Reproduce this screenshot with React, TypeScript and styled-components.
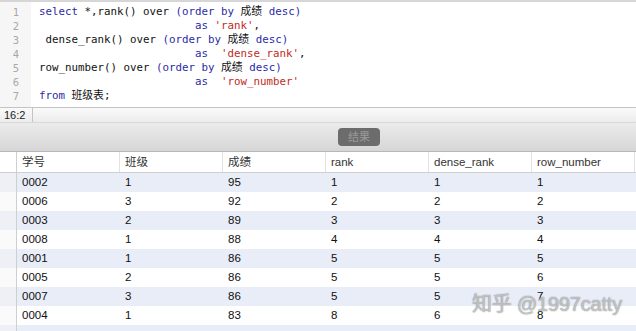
import styled, { createGlobalStyle } from 'styled-components';

const GlobalStyle = createGlobalStyle`
  html, body {
    margin: 0;
    padding: 0;
    background: #ffffff;
    overflow: hidden;
  }
`;

type Tok = { t: string; c?: 'kw' | 'str' };

const code: Tok[][] = [
  [{ t: 'select', c: 'kw' }, { t: ' *,rank() over ' }, { t: '(order by', c: 'kw' }, { t: ' 成绩 ' }, { t: 'desc)', c: 'kw' }],
  [{ t: '                        ' }, { t: 'as', c: 'kw' }, { t: ' ' }, { t: "'rank'", c: 'str' }, { t: ',' }],
  [{ t: ' dense_rank() over ' }, { t: '(order by', c: 'kw' }, { t: ' 成绩 ' }, { t: 'desc)', c: 'kw' }],
  [{ t: '                        ' }, { t: 'as', c: 'kw' }, { t: '  ' }, { t: "'dense_rank'", c: 'str' }, { t: ',' }],
  [{ t: 'row_number() over ' }, { t: '(order by', c: 'kw' }, { t: ' 成绩 ' }, { t: 'desc)', c: 'kw' }],
  [{ t: '                        ' }, { t: 'as', c: 'kw' }, { t: '  ' }, { t: "'row_number'", c: 'str' }],
  [{ t: 'from', c: 'kw' }, { t: ' 班级表;' }],
];

const headers = ['学号', '班级', '成绩', 'rank', 'dense_rank', 'row_number'];

const rows = [
  ['0002', '1', '95', '1', '1', '1'],
  ['0006', '3', '92', '2', '2', '2'],
  ['0003', '2', '89', '3', '3', '3'],
  ['0008', '1', '88', '4', '4', '4'],
  ['0001', '1', '86', '5', '5', '5'],
  ['0005', '2', '86', '5', '5', '6'],
  ['0007', '3', '86', '5', '5', '7'],
  ['0004', '1', '83', '8', '6', '8'],
  ['', '', '', '', '', ''],
];

export default function App() {
  return (
    <St.Page>
      <GlobalStyle />
      <St.Editor>
        <St.Gutter>
          {code.map((_, i) => (
            <St.LineNo key={i}>{i + 1}</St.LineNo>
          ))}
        </St.Gutter>
        <St.Code>
          {code.map((line, i) => (
            <St.CodeLine key={i}>
              {line.map((tok, j) => (
                <St.Token key={j} $kind={tok.c}>{tok.t}</St.Token>
              ))}
            </St.CodeLine>
          ))}
        </St.Code>
      </St.Editor>
      <St.StatusBar>
        <St.Cursor>16:2</St.Cursor>
      </St.StatusBar>
      <St.Toolbar>
        <St.ResultButton>结果</St.ResultButton>
      </St.Toolbar>
      <St.Table>
        <St.Row>
          <St.RowHead $header />
          {headers.map((h) => (
            <St.HeadCell key={h}>{h}</St.HeadCell>
          ))}
        </St.Row>
        {rows.map((r, i) => (
          <St.Row key={i} $striped={i % 2 === 0}>
            <St.RowHead $striped={i % 2 === 0} />
            {r.map((v, j) => (
              <St.Cell key={j}>{v}</St.Cell>
            ))}
          </St.Row>
        ))}
        <St.Watermark>知乎 @1997catty</St.Watermark>
      </St.Table>
    </St.Page>
  );
}

const St = {
  Page: styled.div`
    width: 636px;
    height: 331px;
    display: flex;
    flex-direction: column;
    overflow: hidden;
    font-family: 'Liberation Sans', 'Noto Sans CJK SC', sans-serif;
  `,
  Editor: styled.div`
    height: 105px;
    flex-shrink: 0;
    display: flex;
    border-top: 2px solid #d6d6d6;
    overflow: hidden;
    background: #ffffff;
  `,
  Gutter: styled.div`
    width: 31px;
    flex-shrink: 0;
    padding-top: 3px;
    background: #f6f6f6;
  `,
  LineNo: styled.div`
    height: 14px;
    line-height: 14px;
    width: 19px;
    text-align: right;
    font-family: 'DejaVu Sans Mono', monospace;
    font-size: 10.5px;
    color: #a8a8a8;
  `,
  Code: styled.div`
    padding: 3px 0 0 8px;
    flex: 1;
  `,
  CodeLine: styled.div`
    height: 14px;
    line-height: 14px;
    white-space: pre;
    overflow: hidden;
    font-family: 'DejaVu Sans Mono', 'Noto Sans CJK SC', monospace;
    font-size: 10.8px;
    color: #111111;
  `,
  Token: styled.span<{ $kind?: 'kw' | 'str' }>`
    color: ${({ $kind }) => ($kind === 'kw' ? '#2a2aa8' : $kind === 'str' ? '#c22a1e' : '#111111')};
  `,
  StatusBar: styled.div`
    height: 14px;
    flex-shrink: 0;
    display: flex;
    border-top: 1px solid #c4c4c4;
    background: linear-gradient(#fafafa, #ececec);
  `,
  Cursor: styled.div`
    width: 28px;
    padding-left: 4px;
    border-right: 1px solid #c4c4c4;
    font-size: 11px;
    line-height: 14px;
    color: #222222;
  `,
  Toolbar: styled.div`
    height: 28px;
    flex-shrink: 0;
    display: flex;
    justify-content: center;
    align-items: center;
    padding-left: 82px;
    border-top: 1px solid #d8d8d8;
    border-bottom: 1px solid #b8b8b8;
    background: linear-gradient(#ebebeb, #d6d6d6);
  `,
  ResultButton: styled.div`
    width: 42px;
    height: 18px;
    border-radius: 4px;
    background: #6c6c6c;
    color: #9a9a9a;
    font-size: 11px;
    line-height: 18px;
    text-align: center;
  `,
  Table: styled.div`
    position: relative;
    flex: 1;
    min-height: 0;
    display: flex;
    flex-direction: column;
    overflow: hidden;
    background: #ffffff;
  `,
  Row: styled.div<{ $striped?: boolean }>`
    display: grid;
    grid-template-columns: 17px repeat(6, 103px);
    height: 19px;
    flex-shrink: 0;
    background: ${({ $striped }) => ($striped ? '#e8edf8' : '#ffffff')};
    &:first-child {
      height: 20px;
      border-bottom: 1px solid #cfcfcf;
      background: #ffffff;
    }
  `,
  RowHead: styled.div<{ $header?: boolean; $striped?: boolean }>`
    border-right: 1px solid #cfcfcf;
    background: ${({ $header, $striped }) => ($header ? '#ffffff' : $striped ? '#eef0f5' : '#fafafa')};
  `,
  HeadCell: styled.div`
    padding-left: 5px;
    border-right: 1px solid #e2e2e2;
    font-size: 11.5px;
    line-height: 20px;
    color: #333333;
  `,
  Cell: styled.div`
    padding-left: 5px;
    font-size: 11.5px;
    line-height: 19px;
    color: #111111;
  `,
  Watermark: styled.div`
    position: absolute;
    left: 472px;
    top: 136px;
    font-size: 20px;
    letter-spacing: -0.2px;
    color: rgba(255, 255, 255, 0.55);
    text-shadow: 0 0 1px rgba(90, 90, 90, 0.7), 0 0 1px rgba(90, 90, 90, 0.5);
    white-space: nowrap;
  `,
};
